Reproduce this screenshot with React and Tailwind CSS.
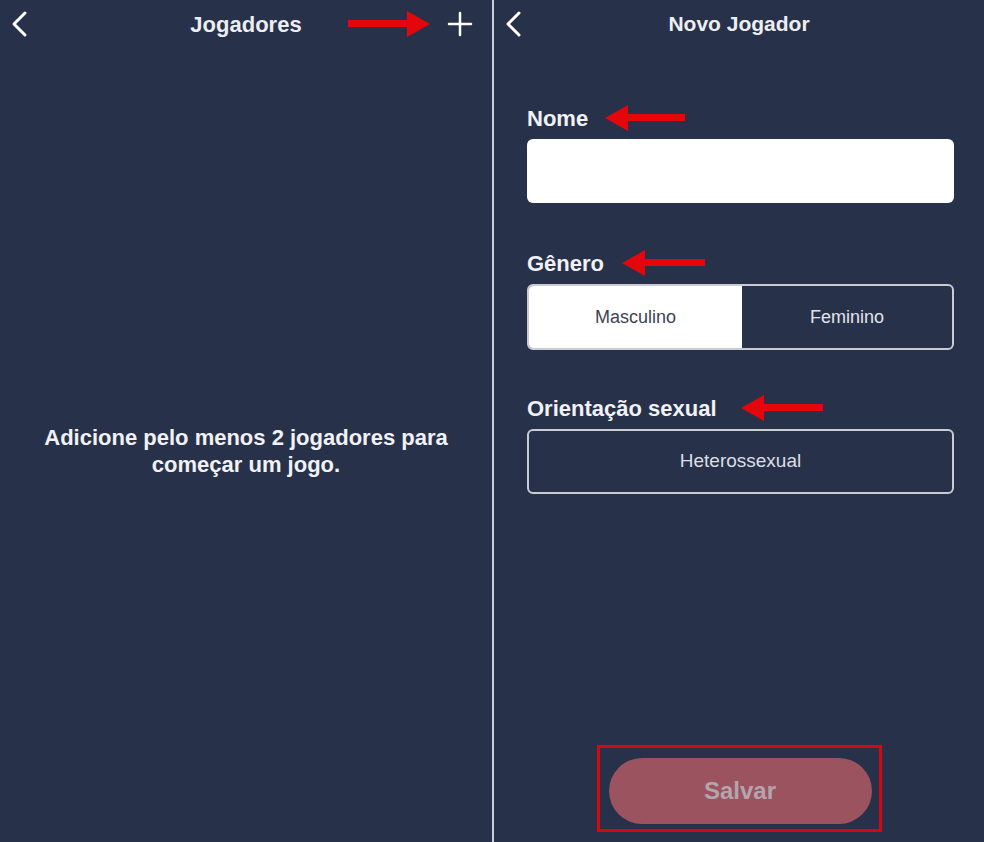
const font = { fontFamily: '"Liberation Sans", Arial, sans-serif' };

function Chevron() {
  return (
    <svg width="20" height="28" viewBox="0 0 20 28" fill="none">
      <path d="M15 3 L4 14 L15 25" stroke="#ffffff" strokeWidth="3" strokeLinecap="round" strokeLinejoin="round" />
    </svg>
  );
}

function Plus() {
  return (
    <svg width="26" height="26" viewBox="0 0 26 26" fill="none">
      <path d="M13 2 V24 M2 13 H24" stroke="#ffffff" strokeWidth="2.5" strokeLinecap="round" />
    </svg>
  );
}

function ArrowLeft({ width = 80 }) {
  return (
    <svg width={width} height="28" viewBox={`0 0 ${width} 28`}>
      <polygon points={`0,14 23,1 23,10 ${width},10 ${width},17 23,17 23,27`} fill="#e3060b" />
    </svg>
  );
}

function ArrowRight({ width = 82 }) {
  return (
    <svg width={width} height="28" viewBox={`0 0 ${width} 28`}>
      <polygon points={`${width},14 ${width - 23},1 ${width - 23},10 0,10 0,17 ${width - 23},17 ${width - 23},27`} fill="#e3060b" />
    </svg>
  );
}

function Label({ children, arrowGap, arrowWidth }) {
  return (
    <div className="flex items-center h-6 mb-[9px]">
      <span className="text-[22px] font-bold text-[#f1f2f5]">{children}</span>
      <span style={{ marginLeft: arrowGap }} className="flex">
        <ArrowLeft width={arrowWidth} />
      </span>
    </div>
  );
}

export default function App() {
  return (
    <div className="w-[984px] h-[842px] flex bg-[#28314a]" style={font}>
      {/* lista de jogadores */}
      <div className="w-[492px] flex flex-col">
        <div className="relative h-12 flex items-center justify-center">
          <div className="absolute left-[10px] top-[10px]">
            <Chevron />
          </div>
          <span className="text-[22px] font-bold text-[#eceef2]">Jogadores</span>
          <div className="absolute left-[348px] top-[10px]">
            <ArrowRight width={82} />
          </div>
          <div className="absolute left-[447px] top-[11px]">
            <Plus />
          </div>
        </div>
        <div className="flex-1 flex items-center justify-center pt-[12px]">
          <p className="text-center text-[22px] leading-[27px] font-bold text-[#f1f2f5]">
            Adicione pelo menos 2 jogadores para
            <br />
            começar um jogo.
          </p>
        </div>
      </div>

      <div className="w-[2px] bg-[#c9cdd6]" />

      {/* novo jogador */}
      <div className="flex-1 flex flex-col">
        <div className="relative h-12 flex items-center justify-center">
          <div className="absolute left-[10px] top-[10px]">
            <Chevron />
          </div>
          <span className="text-[21px] font-bold text-[#eceef2]">Novo Jogador</span>
        </div>

        <div className="flex flex-col pl-[33px] pr-[30px] pt-[58px]">
          <Label arrowGap={17} arrowWidth={80}>Nome</Label>
          <div className="h-16 rounded-md bg-white" />

          <div className="mt-12">
            <Label arrowGap={18} arrowWidth={83}>Gênero</Label>
          </div>
          <div className="h-[66px] flex rounded-md border-2 border-[#c9ccd3] overflow-hidden">
            <div className="w-[213px] bg-white flex items-center justify-center text-[18px] text-[#3d4252]">
              Masculino
            </div>
            <div className="flex-1 flex items-center justify-center text-[18px] text-[#e2e4ea]">
              Feminino
            </div>
          </div>

          <div className="mt-[46px]">
            <Label arrowGap={24} arrowWidth={82}>Orientação sexual</Label>
          </div>
          <div className="h-[65px] rounded-md border-2 border-[#c9ccd3] flex items-center justify-center text-[19px] text-[#dcdfe6]">
            Heterossexual
          </div>
        </div>

        <div className="mt-auto flex justify-center pb-[10px]">
          <div className="border-[3px] border-[#d8070f] pl-[9px] pr-[7px] pt-[10px] pb-[5px]">
            <button className="w-[263px] h-[66px] rounded-full bg-[#9b5360] text-[24px] font-bold text-[#b3a4ad]">
              Salvar
            </button>
          </div>
        </div>
      </div>
    </div>
  );
}
